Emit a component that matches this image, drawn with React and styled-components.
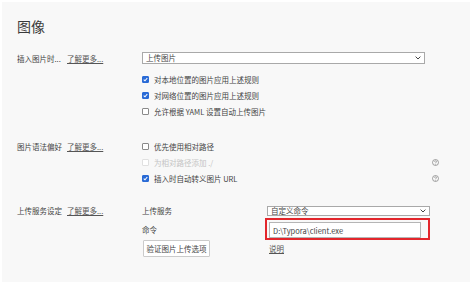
import React from "react";
import styled, { createGlobalStyle } from "styled-components";

const GlobalStyle = createGlobalStyle`
  html, body {
    margin: 0;
    padding: 0;
    background: #ffffff;
  }
  body {
    font-family: "Noto Sans CJK SC", "Noto Sans", "Liberation Sans", sans-serif;
    color: #444;
  }
`;

const Panel = styled.div`
  margin: 2px 4px 2px 2px;
  height: 280px;
  box-sizing: border-box;
  background: #f8f8f8;
  padding: 16px 0 0 15px;
  overflow: hidden;
`;

const Title = styled.h1`
  margin: 0;
  font-size: 14px;
  line-height: 16px;
  font-weight: 400;
  color: #3a3a3a;
`;

const Section = styled.section`
  display: grid;
  grid-template-columns: 125px 297px;
  margin-top: ${(p) => p.$top}px;
  font-size: 7.5px;
`;

const LabelCell = styled.div`
  height: ${(p) => p.$h}px;
  display: flex;
  align-items: center;
`;

const LabelText = styled.span`
  width: 50px;
  white-space: nowrap;
  color: #444;
`;

const Link = styled.a`
  color: #555;
  text-decoration: underline;
  text-underline-offset: 1px;
  white-space: nowrap;
  cursor: pointer;
`;

const Column = styled.div`
  display: flex;
  flex-direction: column;
`;

const SelectBox = styled.div`
  box-sizing: border-box;
  width: ${(p) => p.$w}px;
  height: ${(p) => p.$h}px;
  margin-left: ${(p) => p.$ml || 0}px;
  background: #fff;
  border: 1px solid #a9a9a9;
  display: flex;
  align-items: center;
  justify-content: space-between;
  padding: 0 3px;
  line-height: 1;
  color: #444;
`;

const CheckList = styled.div`
  margin-top: ${(p) => p.$top || 0}px;
  display: flex;
  flex-direction: column;
`;

const CheckRow = styled.div`
  height: 16px;
  display: flex;
  align-items: center;
  gap: 5px;
  color: ${(p) => (p.$disabled ? "#c4c4c4" : "#444")};
`;

const Box = styled.span`
  box-sizing: border-box;
  width: 7px;
  height: 7px;
  flex: none;
  border-radius: 1px;
  border: 1px solid
    ${(p) => (p.$checked ? "#2a6bd6" : p.$disabled ? "#e0e0e0" : "#8a8a8a")};
  background: ${(p) => (p.$checked ? "#2a6bd6" : "#fff")};
  display: flex;
  align-items: center;
  justify-content: center;
`;

const RowText = styled.span`
  flex: 1;
  white-space: nowrap;
`;

const Help = styled.span`
  width: 7px;
  height: 7px;
  display: flex;
`;

const SubGrid = styled.div`
  display: grid;
  grid-template-columns: 125px 172px;
  align-items: center;
`;

const SubRow = styled.div`
  height: ${(p) => p.$h}px;
  display: flex;
  align-items: center;
`;

const Marked = styled.div`
  box-sizing: border-box;
  width: 165px;
  margin-left: -2px;
  border: 2px solid #e3262c;
  padding: 2px 7px 0 2px;
`;

const TextInput = styled.div`
  box-sizing: border-box;
  height: 16px;
  background: #fff;
  border: 1px solid #b5b5b5;
  display: flex;
  align-items: center;
  padding: 0 3px;
  color: #444;
  white-space: nowrap;
`;

const Button = styled.button`
  box-sizing: border-box;
  width: 67px;
  height: 17px;
  margin: 0 0 0 1px;
  padding: 0;
  background: #fff;
  border: 1px solid #cbcbcb;
  border-radius: 1px;
  font-family: inherit;
  font-size: 7.5px;
  color: #444;
`;

const SmallLink = styled(Link)`
  margin-left: 2px;
`;

const Chevron = () => (
  <svg width="6" height="4" viewBox="0 0 6 4">
    <path d="M0.6 0.6 L3 3 L5.4 0.6" fill="none" stroke="#444" strokeWidth="1" />
  </svg>
);

const Tick = () => (
  <svg width="5" height="5" viewBox="0 0 5 5">
    <path d="M0.7 2.6 L2 3.8 L4.3 1" fill="none" stroke="#fff" strokeWidth="1.1" />
  </svg>
);

const HelpIcon = () => (
  <Help>
    <svg width="7" height="7" viewBox="0 0 14 14">
      <circle cx="7" cy="7" r="6" fill="none" stroke="#7d7d7d" strokeWidth="1.4" />
      <path
        d="M5 5.4 C5 3.2 9 3.2 9 5.3 C9 6.8 7 6.8 7 8.4"
        fill="none"
        stroke="#7d7d7d"
        strokeWidth="1.4"
      />
      <circle cx="7" cy="10.4" r="0.9" fill="#7d7d7d" />
    </svg>
  </Help>
);

const Check = ({ checked, disabled, help, children }) => (
  <CheckRow $disabled={disabled}>
    <Box $checked={checked} $disabled={disabled}>
      {checked && <Tick />}
    </Box>
    <RowText>{children}</RowText>
    {help && <HelpIcon />}
  </CheckRow>
);

const Label = ({ h, children }) => (
  <LabelCell $h={h}>
    <LabelText>{children}</LabelText>
    <Link>了解更多...</Link>
  </LabelCell>
);

export default function App() {
  return (
    <>
      <GlobalStyle />
      <Panel>
        <Title>图像</Title>

        <Section $top={18}>
          <Label h={12}>插入图片时...</Label>
          <Column>
            <SelectBox $w={283} $h={12}>
              <span>上传图片</span>
              <Chevron />
            </SelectBox>
            <CheckList $top={7}>
              <Check checked>对本地位置的图片应用上述规则</Check>
              <Check checked>对网络位置的图片应用上述规则</Check>
              <Check>允许根据 YAML 设置自动上传图片</Check>
            </CheckList>
          </Column>
        </Section>

        <Section $top={19}>
          <Label h={16}>图片语法偏好</Label>
          <CheckList>
            <Check>优先使用相对路径</Check>
            <Check disabled help>
              为相对路径添加 ./
            </Check>
            <Check checked help>
              插入时自动转义图片 URL
            </Check>
          </CheckList>
        </Section>

        <Section $top={17}>
          <Label h={15}>上传服务设定</Label>
          <SubGrid>
            <SubRow $h={15}>上传服务</SubRow>
            <SubRow $h={15}>
              <SelectBox $w={163} $h={10}>
                <span>自定义命令</span>
                <Chevron />
              </SelectBox>
            </SubRow>
            <SubRow $h={22}>命令</SubRow>
            <Marked>
              <TextInput>D:\Typora\client.exe</TextInput>
            </Marked>
            <SubRow $h={17}>
              <Button>验证图片上传选项</Button>
            </SubRow>
            <SubRow $h={17}>
              <SmallLink>说明</SmallLink>
            </SubRow>
          </SubGrid>
        </Section>
      </Panel>
    </>
  );
}
